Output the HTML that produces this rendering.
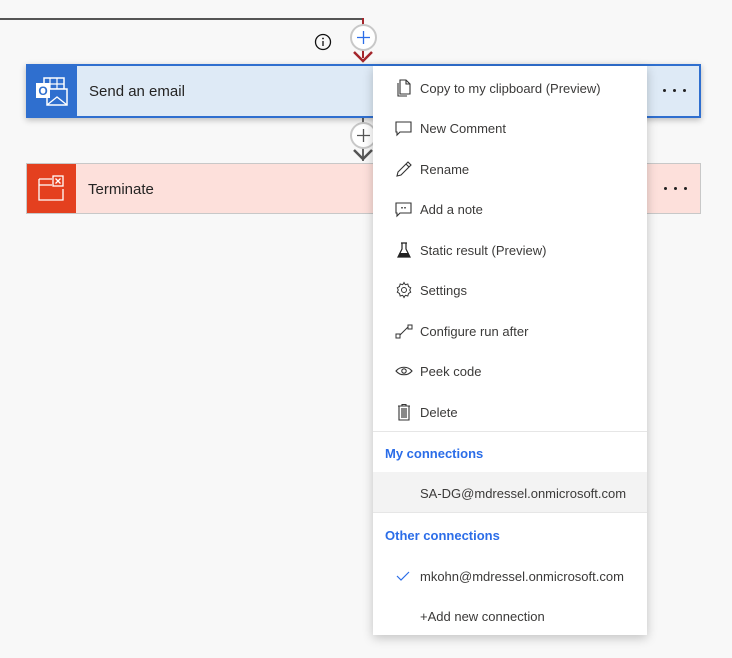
<!DOCTYPE html>
<html><head><meta charset="utf-8"><style>
*{margin:0;padding:0;box-sizing:border-box}
body{width:732px;height:658px;background:#f8f8f8;font-family:"Liberation Sans",sans-serif;position:relative;overflow:hidden;color:#252423}
.abs{position:absolute}
.item{position:absolute;left:373px;width:274px;height:40px;font-size:13px;color:#3b3a39;display:flex;align-items:center}
.item svg{position:absolute;left:22px}
.item span{position:absolute;left:47px}
.hdr{position:absolute;left:385px;font-size:13px;font-weight:bold;color:#2b6de8}
.dot{position:absolute;width:3px;height:3px;border-radius:50%;background:#222}
</style></head><body>
<div class="abs" style="left:0;top:18px;width:364px;height:2px;background:#555"></div>
<div class="abs" style="left:362px;top:18px;width:2px;height:40px;background:#a4262c"></div>
<div class="abs" style="left:350px;top:24px;width:27px;height:27px;border-radius:50%;background:#fff;border:2px solid #c8c8c8"></div>
<svg class="abs" style="left:350px;top:24px" width="27" height="27"><path d="M13.5 7v13M7 13.5h13" stroke="#2b6de8" stroke-width="1.3"/></svg>
<svg class="abs" style="left:351px;top:50px" width="24" height="14"><path d="M3 2l9 9 9-9" stroke="#a4262c" stroke-width="2.5" fill="none"/></svg>
<svg class="abs" style="left:314px;top:33px" width="18" height="18"><circle cx="9" cy="9" r="7.5" stroke="#111" stroke-width="1.3" fill="none"/><path d="M9 8v5" stroke="#111" stroke-width="1.3"/><circle cx="9" cy="5.5" r="0.9" fill="#111"/></svg>
<div class="abs" style="left:362px;top:117px;width:2px;height:44px;background:#666"></div>
<div class="abs" style="left:350px;top:122px;width:27px;height:27px;border-radius:50%;background:#fff;border:2px solid #c8c8c8"></div>
<svg class="abs" style="left:350px;top:122px" width="27" height="27"><path d="M13.5 7v13M7 13.5h13" stroke="#555" stroke-width="1.3"/></svg>
<svg class="abs" style="left:351px;top:148px" width="24" height="14"><path d="M3 2l9 9 9-9" stroke="#555" stroke-width="2.5" fill="none"/></svg>
<div class="abs" style="left:26px;top:64px;width:675px;height:54px;background:#deeaf6;border:2px solid #2f6fcf;box-shadow:0 2px 6px rgba(0,0,0,.25)"></div>
<div class="abs" style="left:26px;top:64px;width:51px;height:54px;background:#2f6fcf"></div>
<svg class="abs" style="left:34px;top:75px" width="36" height="32"><rect x="10" y="3" width="20" height="16" fill="none" stroke="#fff" stroke-width="1.5"/><path d="M16 3v16M23 3v16M10 9h20M10 14h20" stroke="#fff" stroke-width="1.2"/><rect x="13" y="14" width="20" height="16" fill="#2f6fcf" stroke="#fff" stroke-width="1.5"/><path d="M13 30l10-8 10 8" stroke="#fff" stroke-width="1.3" fill="none"/><rect x="2" y="8" width="14" height="15" fill="#fff"/><text x="9" y="20" font-size="12" font-weight="bold" fill="#2f6fcf" text-anchor="middle" font-family="Liberation Sans">O</text></svg>
<div class="abs" style="left:89px;top:83px;font-size:15px">Send an email</div>
<div class="dot" style="left:663px;top:89px"></div><div class="dot" style="left:673px;top:89px"></div><div class="dot" style="left:683px;top:89px"></div>
<div class="abs" style="left:26px;top:163px;width:675px;height:51px;background:#fde0db;border:1px solid #c8c8c8"></div>
<div class="abs" style="left:27px;top:164px;width:49px;height:49px;background:#e4401f"></div>
<svg class="abs" style="left:36px;top:173px" width="30" height="30"><path d="M3 6h13M3 6v21h24V16M3 12h13" stroke="#fff" stroke-width="1.3" fill="none"/><rect x="17" y="3" width="10" height="10" fill="none" stroke="#fff" stroke-width="1.3"/><path d="M19.5 5.5l5 5M24.5 5.5l-5 5" stroke="#fff" stroke-width="1.3"/></svg>
<div class="abs" style="left:88px;top:181px;font-size:15px">Terminate</div>
<div class="dot" style="left:664px;top:187px"></div><div class="dot" style="left:674px;top:187px"></div><div class="dot" style="left:684px;top:187px"></div>
<div class="abs" style="left:373px;top:66px;width:274px;height:569px;background:#fff;box-shadow:0 3px 10px rgba(0,0,0,.22)"></div>
<div class="item" style="top:68px"><svg width="16" height="18"><path d="M5 1h6l4 4v10H5zM11 1v4h4M3 4v13h9" fill="none" stroke="#333" stroke-width="1.1"/></svg><span>Copy to my clipboard (Preview)</span></div>
<div class="item" style="top:108px"><svg width="18" height="18"><path d="M1 3h15v10H5l-3 3v-3H1z" fill="none" stroke="#333" stroke-width="1.1"/></svg><span>New Comment</span></div>
<div class="item" style="top:149px"><svg width="18" height="18"><path d="M2 16l1-4L13 2l3 3L6 15zM11 4l3 3" fill="none" stroke="#333" stroke-width="1.1"/></svg><span>Rename</span></div>
<div class="item" style="top:189px"><svg width="18" height="18"><path d="M1 3h15v10H5l-3 3v-3H1z" fill="none" stroke="#333" stroke-width="1.1"/><path d="M7 7v1.5M10 7v1.5" stroke="#333" stroke-width="1.5"/></svg><span>Add a note</span></div>
<div class="item" style="top:230px"><svg width="18" height="18"><path d="M6 2h6M7 2v6l-4 8h12l-4-8V2" fill="none" stroke="#222" stroke-width="1.2"/><path d="M4.5 12h9l1.5 4H3z" fill="#222"/></svg><span>Static result (Preview)</span></div>
<div class="item" style="top:270px"><svg width="18" height="18"><circle cx="9" cy="9" r="2.5" fill="none" stroke="#333"/><path d="M9 1.5l1.3 2.2 2.5-.7.7 2.5 2.2 1.3-1 2.2 1 2.2-2.2 1.3-.7 2.5-2.5-.7L9 16.5l-1.3-2.2-2.5.7-.7-2.5L2.3 11.2l1-2.2-1-2.2 2.2-1.3.7-2.5 2.5.7z" fill="none" stroke="#333" stroke-width="1"/></svg><span>Settings</span></div>
<div class="item" style="top:311px"><svg width="18" height="18"><rect x="1" y="12" width="4" height="4" fill="none" stroke="#333"/><rect x="13" y="3" width="4" height="4" fill="none" stroke="#333"/><path d="M5 13l8-8" stroke="#333"/></svg><span>Configure run after</span></div>
<div class="item" style="top:351px"><svg width="18" height="18"><path d="M1 9c4-5 12-5 16 0-4 5-12 5-16 0z" fill="none" stroke="#333" stroke-width="1.1"/><circle cx="9" cy="9" r="2.2" fill="none" stroke="#333" stroke-width="1.1"/></svg><span>Peek code</span></div>
<div class="item" style="top:392px"><svg width="18" height="18"><path d="M3 3h12M7 3V1.5h4V3M4 3v14h10V3" fill="none" stroke="#333" stroke-width="1.1"/><rect x="6" y="5" width="6" height="10" fill="#888"/></svg><span>Delete</span></div>
<div class="abs" style="left:373px;top:431px;width:274px;height:1px;background:#e6e6e6"></div>
<div class="hdr" style="top:446px">My connections</div>
<div class="abs" style="left:373px;top:472px;width:274px;height:41px;background:#f3f3f3;border-bottom:1px solid #e6e6e6"></div>
<div class="item" style="top:473px"><span>SA-DG@mdressel.onmicrosoft.com</span></div>
<div class="hdr" style="top:528px">Other connections</div>
<div class="item" style="top:556px"><svg width="16" height="16"><path d="M2 8l4 4 8-8" fill="none" stroke="#2b6de8" stroke-width="1.2"/></svg><span>mkohn@mdressel.onmicrosoft.com</span></div>
<div class="item" style="top:596px"><span>+Add new connection</span></div>
</body></html>
